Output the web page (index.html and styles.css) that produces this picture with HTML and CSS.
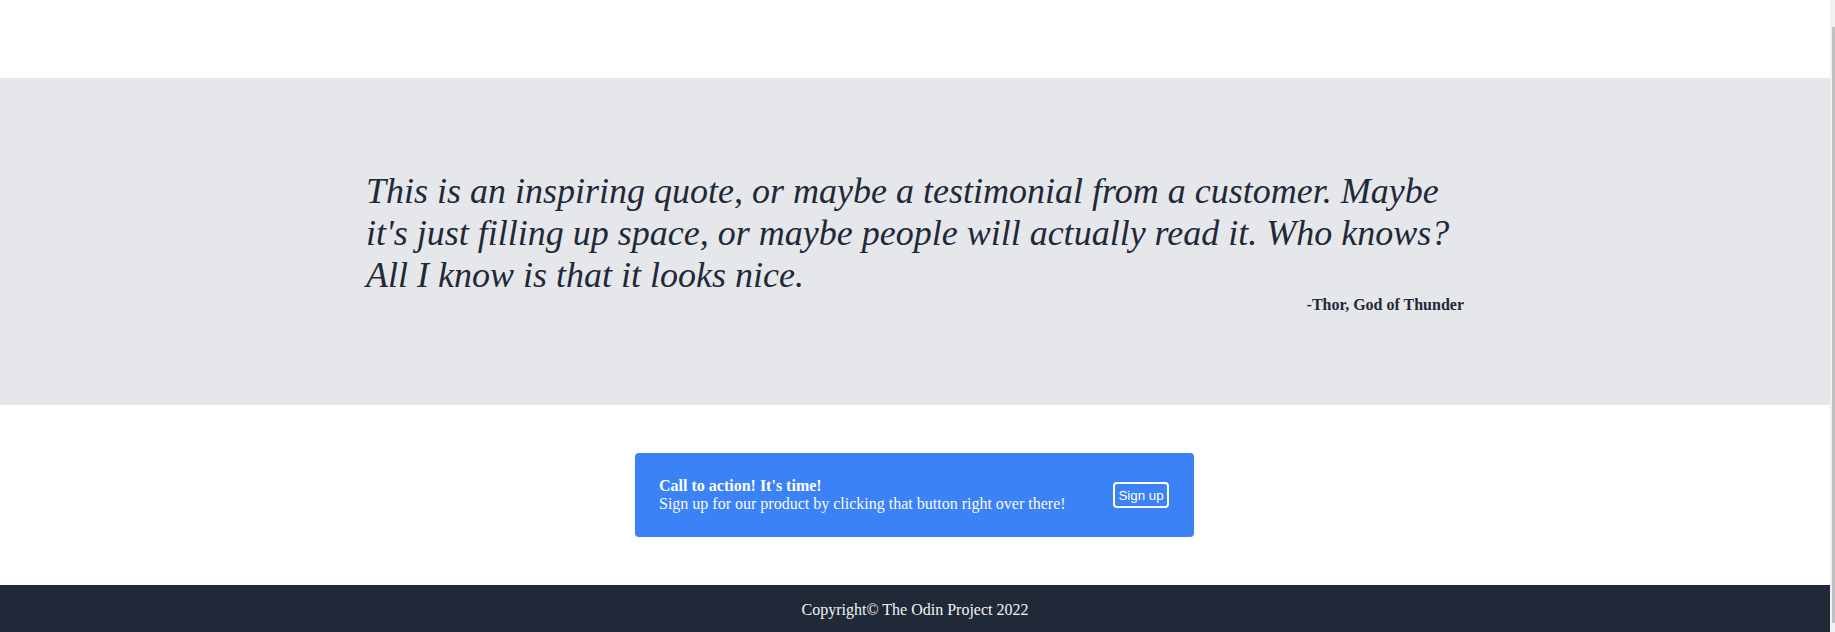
FILE: index.html
```html
<!DOCTYPE html>
<html lang="en">
<head>
<meta charset="utf-8">
<title>Landing Page</title>
<link rel="stylesheet" href="styles.css">
</head>
<body>
<div class="frame">
  <div class="page">
    <div class="top-space"></div>
    <section class="quote-section">
      <div class="quote-wrap">
        <p class="quote">This is an inspiring quote, or maybe a testimonial from a customer. Maybe it's just filling up space, or maybe people will actually read it. Who knows? All I know is that it looks nice.</p>
        <p class="author">-Thor, God of Thunder</p>
      </div>
    </section>
    <section class="cta-section">
      <div class="cta">
        <div class="cta-text">
          <div class="cta-title">Call to action! It's time!</div>
          <div class="cta-sub">Sign up for our product by clicking that button right over there!</div>
        </div>
        <button class="cta-btn">Sign up</button>
      </div>
    </section>
    <footer class="footer">Copyright© The Odin Project 2022</footer>
  </div>
  <div class="scrollbar"><div class="thumb"></div></div>
</div>
</body>
</html>
```

FILE: styles.css
```css
* { box-sizing: border-box; }
html, body {
  margin: 0;
  padding: 0;
  height: 632px;
  overflow: hidden;
  background: #ffffff;
  font-family: "Liberation Serif", "Times New Roman", serif;
  font-size: 16px;
}
.frame {
  display: flex;
  height: 632px;
}
.page {
  flex: 1;
  display: flex;
  flex-direction: column;
  overflow: hidden;
}
.top-space {
  height: 78px;
  flex: none;
}
.quote-section {
  background: #e5e7eb;
  padding: 92px 0 91px;
  flex: none;
}
.quote-wrap {
  width: 60%;
  margin: 0 auto;
  color: #1f2937;
}
.quote {
  margin: 0;
  font-size: 36px;
  font-style: italic;
  line-height: normal;
}
.author {
  margin: 0;
  text-align: right;
  font-weight: bold;
  font-size: 16px;
}
.cta-section {
  padding: 48px 1px 48px 0;
  display: flex;
  justify-content: center;
  flex: none;
}
.cta {
  width: 559px;
  background: #3b82f6;
  border-radius: 4px;
  padding: 24px 25px 24px 24px;
  display: flex;
  justify-content: space-between;
  align-items: center;
  color: #ffffff;
}
.cta-title { font-weight: bold; }
.cta-sub { color: #f9fafb; }
.cta-btn {
  width: 56px;
  height: 26px;
  padding: 0;
  border: 2px solid #ffffff;
  border-radius: 4px;
  background: transparent;
  color: #ffffff;
  font-family: "Liberation Sans", Arial, sans-serif;
  font-size: 13.333px;
  display: flex;
  align-items: center;
  justify-content: center;
}
.footer {
  flex: none;
  height: 60px;
  background: #1f2937;
  color: #f3f4f6;
  text-align: center;
  padding-top: 16px;
}
.scrollbar {
  width: 5px;
  flex: none;
  background: #f1f1f1;
  padding-top: 27px;
}
.thumb {
  margin-left: 2px;
  height: 596px;
  background: #c1c1c1;
}
```
